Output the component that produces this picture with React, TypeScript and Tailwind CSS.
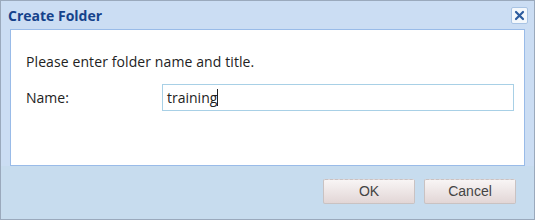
export default function App() {
  return (
    <div className="w-[535px] h-[220px] bg-white" style={{ fontFamily: "'Open Sans', sans-serif" }}>
      <div className="w-[535px] h-[220px] border border-[#9aa9bc] bg-[#cbddf3] flex flex-col">
        {/* header */}
        <div className="h-[28px] flex items-center justify-between pl-[7px] pr-[6px]">
          <span className="text-[14px] font-bold text-[#15428b]">Create Folder</span>
          <div className="w-[17px] h-[17px] bg-[#f4f8fc] border border-[#a9c4e4] rounded-[2px] flex items-center justify-center">
            <svg width="11" height="11" viewBox="0 0 11 11">
              <path d="M2 2 L9 9 M9 2 L2 9" stroke="#2d5c9e" strokeWidth="2.2" strokeLinecap="round" />
            </svg>
          </div>
        </div>
        {/* body */}
        <div className="flex-1 flex flex-col px-[9px]">
          <div className="h-[137px] bg-white border border-[#99bbe8] pl-[15px] pr-[10px] pt-[21px]">
            <div className="text-[14px] text-[#222] tracking-[0.1px]">Please enter folder name and title.</div>
            <div className="flex items-center mt-[12px]">
              <span className="w-[136px] shrink-0 text-[14px] text-[#222]">Name:</span>
              <div className="w-[352px] h-[27px] border border-[#a8d0e6] flex items-center pl-[4px] text-[14px] text-[#222]">
                training<span className="w-px h-[17px] bg-[#222]" />
              </div>
            </div>
          </div>
          {/* footer */}
          <div
            className="flex-1 bg-[#c7dcee] -mx-[9px] flex items-center justify-end gap-[9px] pr-[18px] pb-[3px]"
            style={{ fontFamily: "'Liberation Sans', Arial, sans-serif" }}
          >
            <button className="w-[92px] h-[25px] rounded-[2px] border border-[#c9c2c2] [border-top-style:dashed] bg-gradient-to-b from-[#f8f5f5] to-[#e2d6d6] text-[14px] text-[#444]">
              OK
            </button>
            <button className="w-[92px] h-[25px] rounded-[2px] border border-[#c9c2c2] [border-top-style:dashed] bg-gradient-to-b from-[#f8f5f5] to-[#e2d6d6] text-[14px] text-[#444]">
              Cancel
            </button>
          </div>
        </div>
      </div>
    </div>
  );
}
